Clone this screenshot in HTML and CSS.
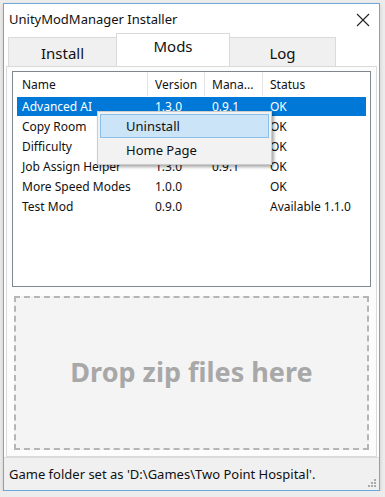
FILE: index.html
```html
<!DOCTYPE html>
<html lang="en">
<head>
  <meta charset="UTF-8" />
  <meta name="viewport" content="width=device-width, initial-scale=1.0"/>
  <title>UnityModManager Installer</title>
  <link rel="stylesheet" href="styles.css">
</head>
<body>
  <div class="window">
    <div class="titlebar">
      <span class="title">UnityModManager Installer</span>
      <svg class="close" width="14" height="14" viewBox="0 0 14 14">
        <path d="M1 1 L13 13 M13 1 L1 13" stroke="#222" stroke-width="1.1" fill="none"/>
      </svg>
    </div>
    <div class="tabs">
      <div class="tab tab-install">Install</div>
      <div class="tab active">Mods</div>
      <div class="tab">Log</div>
    </div>
    <div class="page">
      <div class="list">
        <div class="list-head">
          <div class="col c-name">Name</div>
          <div class="col c-ver">Version</div>
          <div class="col c-man">Mana...</div>
          <div class="col c-stat">Status</div>
        </div>
        <div class="rows">
          <div class="row selected"><span class="c-name">Advanced AI</span><span class="c-ver">1.3.0</span><span class="c-man">0.9.1</span><span class="c-stat">OK</span></div>
          <div class="row"><span class="c-name">Copy Room</span><span class="c-ver"></span><span class="c-man"></span><span class="c-stat">OK</span></div>
          <div class="row"><span class="c-name">Difficulty</span><span class="c-ver"></span><span class="c-man"></span><span class="c-stat">OK</span></div>
          <div class="row"><span class="c-name">Job Assign Helper</span><span class="c-ver">1.3.0</span><span class="c-man">0.9.1</span><span class="c-stat">OK</span></div>
          <div class="row"><span class="c-name">More Speed Modes</span><span class="c-ver">1.0.0</span><span class="c-man"></span><span class="c-stat">OK</span></div>
          <div class="row"><span class="c-name">Test Mod</span><span class="c-ver">0.9.0</span><span class="c-man"></span><span class="c-stat">Available 1.1.0</span></div>
        </div>
        <div class="menu">
          <div class="menu-item hover">Uninstall</div>
          <div class="menu-item">Home Page</div>
        </div>
      </div>
      <div class="dropzone">Drop zip files here</div>
    </div>
    <div class="statusbar">
      <span>Game folder set as 'D:\Games\Two Point Hospital'.</span>
      <svg class="grip" width="9" height="9" viewBox="0 0 9 9">
        <rect x="6" y="0" width="2" height="2" fill="#aaa"/>
        <rect x="3" y="3" width="2" height="2" fill="#aaa"/>
        <rect x="6" y="3" width="2" height="2" fill="#aaa"/>
        <rect x="0" y="6" width="2" height="2" fill="#aaa"/>
        <rect x="3" y="6" width="2" height="2" fill="#aaa"/>
        <rect x="6" y="6" width="2" height="2" fill="#aaa"/>
      </svg>
    </div>
  </div>
</body>
</html>
```

FILE: styles.css
```css
body { margin: 0; padding: 3px 4px 0 3px; background: #ececec; font-family: "Noto Sans", "Open Sans", sans-serif; color: #111; }
.window { width: 375px; height: 486px; border: 1px solid #6ea8da; background: #fff; display: flex; flex-direction: column; box-shadow: 0 2px 4px rgba(0,0,0,0.15); }
.titlebar { height: 29px; display: flex; align-items: center; justify-content: space-between; padding: 0 9px 0 5px; }
.title { font-size: 13px; }
.close { margin-top: 2px; }
.tabs { height: 33px; display: flex; align-items: flex-end; padding-left: 4px; background: #fff; }
.tab { width: 107px; height: 29px; display: flex; align-items: center; justify-content: center; font-size: 15px; background: #f0f0f0; border: 1px solid #dadada; border-bottom: none; padding-top: 1px; box-sizing: border-box; }
.tab-install { width: 109px; }
.tab.active { height: 33px; width: 114px; background: #fff; margin: 0 -1px; position: relative; z-index: 1; align-items: flex-start; padding-top: 2px; }
.page { flex: 1; border: 1px solid #dadada; margin: 0 2px 0 2px; padding: 4px 5px 6px 5px; display: flex; flex-direction: column; gap: 9px; background: #fcfcfc; }
.list { height: 214px; border: 1px solid #82868f; background: #fff; position: relative; }
.list-head { height: 24px; display: flex; font-size: 12px; }
.col { display: flex; align-items: center; padding-left: 7px; box-sizing: border-box; border-right: 1px solid #e5e5e5; }
.list-head .c-name { width: 135px; padding-left: 9px; }
.list-head .c-ver { width: 57px; }
.list-head .c-man { width: 58px; }
.list-head .c-stat { flex: 1; border-right: none; }
.rows { padding: 1px 4px 0 4px; }
.row { height: 20px; display: flex; align-items: center; font-size: 12px; }
.row span { box-sizing: border-box; white-space: nowrap; }
.row .c-name { width: 131px; padding-left: 5px; }
.row .c-ver { width: 57px; padding-left: 7px; }
.row .c-man { width: 58px; padding-left: 7px; }
.row .c-stat { flex: 1; padding-left: 7px; }
.row.selected { background: #0078d7; color: #fff; height: 19px; }
.menu { position: absolute; left: 84px; top: 39px; width: 175px; padding: 2px; background: #f2f2f2; border: 1px solid #cccccc; box-shadow: 2px 2px 3px rgba(0,0,0,0.35); box-sizing: border-box; }
.menu-item { height: 22px; display: flex; align-items: center; padding-left: 25px; font-size: 13px; border: 1px solid transparent; }
.menu-item.hover { background: #cce4f7; border-color: #8cbfe8; }
.dropzone { flex: 1; margin: 0 2px; border: 2px dashed #b5b5b5; background: #f4f4f4; display: flex; align-items: center; justify-content: center; font-size: 27px; font-weight: bold; color: #a8a8a8; padding-bottom: 4px; }
.statusbar { height: 32px; border-top: 1px solid #dcdcdc; background: #f0f0f0; display: flex; align-items: center; justify-content: space-between; padding: 0 2px 0 5px; font-size: 13px; position: relative; }
.grip { align-self: flex-end; margin-bottom: 2px; }
```
